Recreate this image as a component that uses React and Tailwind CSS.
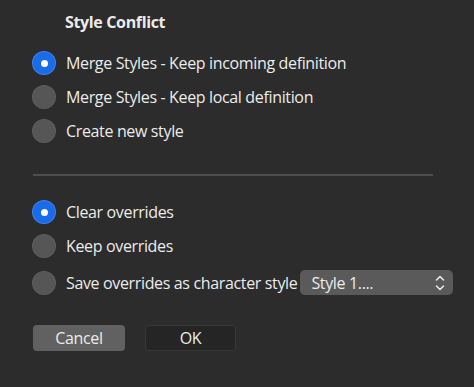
import { useState } from "react";

function Radio({ checked, onClick }) {
  return (
    <button
      type="button"
      onClick={onClick}
      className={`flex h-[22px] w-[22px] shrink-0 items-center justify-center rounded-full ${
        checked ? "bg-[#1a6be8] ring-1 ring-[#3b82f0]" : "bg-[#565656] ring-1 ring-[#5e5e5e]"
      }`}
    >
      {checked && <span className="h-[7px] w-[7px] rounded-full bg-white" />}
    </button>
  );
}

function Option({ label, checked, onClick, children, tall }) {
  return (
    <div className={`flex items-center ${tall ? "h-[39px]" : "h-[34px]"}`}>
      <Radio checked={checked} onClick={onClick} />
      <span className="ml-[11px] whitespace-nowrap" onClick={onClick}>
        {label}
      </span>
      {children}
    </div>
  );
}

export default function App() {
  const [conflict, setConflict] = useState("incoming");
  const [overrides, setOverrides] = useState("clear");

  return (
    <div
      className="h-[387px] w-[474px] bg-[#2c2c2c] pl-[33px] pt-3 text-[16px] tracking-[-0.35px] text-[#ebebeb]"
      style={{ fontFamily: '"Open Sans", "Liberation Sans", sans-serif' }}
    >
      <div className="flex h-5 items-center pl-[32px] font-bold">Style Conflict</div>

      {/* Conflict options */}
      <div className="mt-[14px] flex flex-col">
        <Option
          label="Merge Styles - Keep incoming definition"
          checked={conflict === "incoming"}
          onClick={() => setConflict("incoming")}
        />
        <Option
          label="Merge Styles - Keep local definition"
          checked={conflict === "local"}
          onClick={() => setConflict("local")}
        />
        <Option
          label="Create new style"
          checked={conflict === "new"}
          onClick={() => setConflict("new")}
        />
      </div>

      <div className="mt-[26px] h-[2px] w-[400px] bg-[#4e4e4e]" />

      {/* Overrides */}
      <div className="mt-[19px] flex flex-col">
        <Option
          label="Clear overrides"
          checked={overrides === "clear"}
          onClick={() => setOverrides("clear")}
        />
        <Option
          label="Keep overrides"
          checked={overrides === "keep"}
          onClick={() => setOverrides("keep")}
        />
        <Option
          label="Save overrides as character style"
          checked={overrides === "save"}
          onClick={() => setOverrides("save")}
          tall
        >
          <div className="ml-[3px] flex h-[25px] w-[153px] items-center justify-between rounded-[5px] bg-[#5a5a5a] pl-[11px] pr-[8px]">
            <span>Style 1....</span>
            <svg width="10" height="18" viewBox="0 0 10 18" fill="none" stroke="#e8e8e8" strokeWidth="1.6" strokeLinecap="round" strokeLinejoin="round">
              <path d="M1.5 6 L5 2.5 L8.5 6" />
              <path d="M1.5 12 L5 15.5 L8.5 12" />
            </svg>
          </div>
        </Option>
      </div>

      <div className="mt-[23px] flex gap-[20px]">
        <button className="h-[26px] w-[92px] rounded-[4px] bg-[#616161] text-[#ececec]">Cancel</button>
        <button className="h-[26px] w-[91px] rounded-[4px] border border-[#383838] bg-[#252525] text-[#ececec]">OK</button>
      </div>
    </div>
  );
}
